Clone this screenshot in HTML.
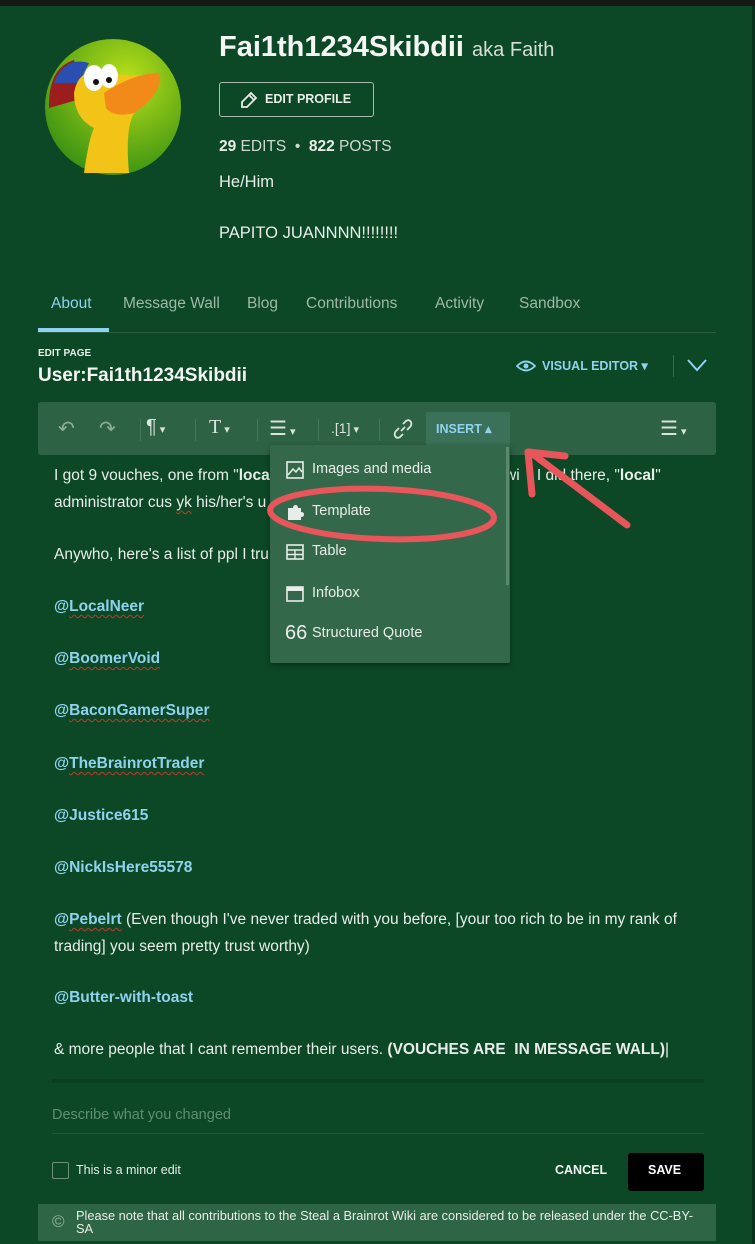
<!DOCTYPE html>
<html><head><meta charset="utf-8"><style>
*{margin:0;padding:0;box-sizing:border-box}
body{width:755px;height:1244px;background:#0c4826;font-family:"Liberation Sans",sans-serif;color:#e8ede9;position:relative;overflow:hidden}
.a{position:absolute;white-space:nowrap}
.lnk{color:#8fd2ee;font-weight:bold}
.sq{text-decoration:underline wavy #c0392b;text-decoration-thickness:1px;text-underline-offset:3px}
.t{font-size:15.5px;left:54px}
.tab{font-size:15.5px;color:#9fb8a8;top:295px}
.mi{font-size:14.5px;color:#e8ede9;left:312px}
.tb{color:#d8e4dc;font-size:20px;top:416px}
</style></head><body>
<div class="a" style="left:0;top:0;width:755px;height:6px;background:#151a17"></div>
<div class="a" style="right:0;top:6px;width:3px;height:1238px;background:#07301a"></div>

<svg class="a" style="left:44px;top:38px" width="138" height="138" viewBox="0 0 138 138">
<defs><radialGradient id="g" cx="60%" cy="30%" r="80%"><stop offset="0" stop-color="#b8e01a"/><stop offset="1" stop-color="#2f8a12"/></radialGradient></defs>
<circle cx="69" cy="69" r="68" fill="url(#g)"/>
<path d="M5 70 Q4 30 30 22 L40 60 Z" fill="#9b1d1d"/>
<path d="M10 45 Q20 18 45 25 L35 45Z" fill="#2a4fb0"/>
<path d="M40 135 Q45 100 50 90 Q30 80 30 55 Q35 25 70 35 Q90 40 110 35 Q120 50 95 70 Q80 80 85 135Z" fill="#f2c418"/>
<path d="M60 55 Q90 35 115 35 Q120 55 90 75 Q70 80 62 70Z" fill="#f28a1a"/>
<ellipse cx="50" cy="40" rx="10" ry="13" fill="#fff"/><ellipse cx="65" cy="38" rx="9" ry="12" fill="#fff"/>
<circle cx="52" cy="44" r="3" fill="#111"/><circle cx="65" cy="42" r="3" fill="#111"/>
</svg>

<div class="a" style="left:219px;top:31px;font-size:29px;font-weight:bold;color:#f4f6f4">Fai1th1234Skibdii <span style="font-weight:normal;font-size:20px;color:#d6ded8">aka Faith</span></div>
<div class="a" style="left:219px;top:82px;width:155px;height:35px;border:1px solid #a8bdb0;border-radius:3px"></div>
<svg class="a" style="left:238px;top:89px" width="22" height="22" viewBox="0 0 22 22"><path d="M4 18 L4 13 L13 4 L18 9 L9 18 Z M11 6 L16 11" fill="none" stroke="#e8ede9" stroke-width="1.8"/></svg>
<div class="a" style="left:265px;top:92px;font-size:12.5px;font-weight:bold;color:#e8ede9">EDIT PROFILE</div>
<div class="a" style="left:219px;top:138px;font-size:15.5px;color:#cfd9d2"><b style="color:#e8ede9">29</b> EDITS &nbsp;•&nbsp; <b style="color:#e8ede9">822</b> POSTS</div>
<div class="a" style="left:219px;top:173px;font-size:16.5px">He/Him</div>
<div class="a" style="left:219px;top:224px;font-size:16.5px">PAPITO JUANNNN!!!!!!!!</div>

<div class="a tab" style="left:51px;color:#8fd2ee">About</div>
<div class="a tab" style="left:123px">Message Wall</div>
<div class="a tab" style="left:247px">Blog</div>
<div class="a tab" style="left:306px">Contributions</div>
<div class="a tab" style="left:435px">Activity</div>
<div class="a tab" style="left:519px">Sandbox</div>
<div class="a" style="left:38px;top:332px;width:678px;height:1px;background:#2a5e3e"></div>
<div class="a" style="left:38px;top:328px;width:71px;height:4px;background:#8fd2ee"></div>

<div class="a" style="left:38px;top:348px;font-size:10px;font-weight:bold">EDIT PAGE</div>
<div class="a" style="left:38px;top:365px;font-size:19px;font-weight:bold;color:#f2f5f3">User:Fai1th1234Skibdii</div>
<svg class="a" style="left:516px;top:357px" width="20" height="18" viewBox="0 0 20 18"><path d="M1 9 Q10 0 19 9 Q10 18 1 9Z" fill="none" stroke="#8fd2ee" stroke-width="1.8"/><circle cx="10" cy="9" r="2.5" fill="#8fd2ee"/></svg>
<div class="a" style="left:542px;top:358px;font-size:12.5px;font-weight:bold;color:#8fd2ee">VISUAL EDITOR ▾</div>
<div class="a" style="left:673px;top:355px;width:1px;height:22px;background:#3b6b4e"></div>
<svg class="a" style="left:686px;top:358px" width="22" height="14" viewBox="0 0 22 14"><path d="M2 2 L11 12 L20 2" fill="none" stroke="#8fd2ee" stroke-width="2"/></svg>

<div class="a" style="left:38px;top:402px;width:678px;height:53px;background:#2e6245;border-radius:3px"></div>
<div class="a tb" style="left:58px;color:#8fae9a">↶</div>
<div class="a tb" style="left:99px;color:#8fae9a">↷</div>
<div class="a" style="left:140px;top:419px;width:1px;height:22px;background:#46775a"></div>
<div class="a tb" style="left:146px">¶<span style="font-size:11px"> ▾</span></div>
<div class="a" style="left:195px;top:419px;width:1px;height:22px;background:#46775a"></div>
<div class="a tb" style="left:209px;font-family:'Liberation Serif',serif">T<span style="font-size:11px;font-family:'Liberation Sans'"> ▾</span></div>
<div class="a" style="left:257px;top:419px;width:1px;height:22px;background:#46775a"></div>
<div class="a tb" style="left:269px">☰<span style="font-size:11px"> ▾</span></div>
<div class="a" style="left:318px;top:419px;width:1px;height:22px;background:#46775a"></div>
<div class="a tb" style="left:331px;font-size:14px;top:420px">.[1]<span style="font-size:11px"> ▾</span></div>
<div class="a" style="left:379px;top:419px;width:1px;height:22px;background:#46775a"></div>
<svg class="a" style="left:393px;top:418px" width="20" height="22" viewBox="0 0 20 22"><path d="M8 13 L12 9 M10 6 L13 3 Q16 1 18 4 Q19 7 17 9 L14 12 M10 16 L7 19 Q4 21 2 18 Q1 15 3 13 L6 10" fill="none" stroke="#d8e4dc" stroke-width="1.8"/></svg>
<div class="a" style="left:426px;top:412px;width:84px;height:33px;background:#3a7158;border-radius:2px"></div>
<div class="a" style="left:436px;top:421px;font-size:12.5px;font-weight:bold;color:#8fd2ee">INSERT ▴</div>
<div class="a tb" style="left:660px">☰<span style="font-size:11px"> ▾</span></div>

<div class="a t" style="top:467px">I got 9 vouches, one from "<b>loca</b></div>
<div class="a t" style="top:467px;left:505px">wi&nbsp; t I did there, "<b>local</b>"</div>
<div class="a t" style="top:494px">administrator cus <span class="sq">yk</span> his/her's u</div>
<div class="a t" style="top:546px">Anywho, here's a list of ppl I tru</div>
<div class="a t lnk" style="top:598px">@<span class="sq">LocalNeer</span></div>
<div class="a t lnk" style="top:650px">@<span class="sq">BoomerVoid</span></div>
<div class="a t lnk" style="top:702px">@<span class="sq">BaconGamerSuper</span></div>
<div class="a t lnk" style="top:755px">@<span class="sq">TheBrainrotTrader</span></div>
<div class="a t lnk" style="top:807px">@Justice615</div>
<div class="a t lnk" style="top:859px">@NickIsHere55578</div>
<div class="a t" style="top:911px"><span class="lnk">@<span class="sq">Pebelrt</span></span> (Even though I've never traded with you before, [your too rich to be in my rank of</div>
<div class="a t" style="top:938px">trading] you seem pretty trust worthy)</div>
<div class="a t lnk" style="top:989px">@Butter-with-toast</div>
<div class="a t" style="top:1041px">&amp; more people that I cant remember their users. <b>(VOUCHES ARE&nbsp; IN MESSAGE WALL)</b>|</div>

<div class="a" style="left:270px;top:445px;width:240px;height:218px;background:#33694a;box-shadow:0 2px 6px rgba(0,0,0,.35);border-radius:2px"></div>
<div class="a" style="left:506px;top:447px;width:3px;height:138px;background:#5a8a6e"></div>
<svg class="a" style="left:286px;top:461px" width="18" height="18" viewBox="0 0 18 18"><rect x="1" y="1" width="16" height="16" fill="none" stroke="#e8ede9" stroke-width="1.6"/><path d="M2 14 L7 8 L10 11 L13 7 L16 11" fill="none" stroke="#e8ede9" stroke-width="1.5"/></svg>
<div class="a mi" style="top:461px">Images and media</div>
<svg class="a" style="left:286px;top:503px" width="18" height="18" viewBox="0 0 18 18"><path d="M2 5 H7 Q7 2 9.5 2 Q12 2 12 5 H15 V9 Q18 9 18 11.5 Q18 14 15 14 V17 H2Z" fill="#e8ede9"/></svg>
<div class="a mi" style="top:503px">Template</div>
<svg class="a" style="left:286px;top:543px" width="18" height="18" viewBox="0 0 18 18"><rect x="1" y="2" width="16" height="14" fill="none" stroke="#e8ede9" stroke-width="1.6"/><path d="M1 7 H17 M9 7 V16 M1 11.5 H17" stroke="#e8ede9" stroke-width="1.4"/></svg>
<div class="a mi" style="top:543px">Table</div>
<svg class="a" style="left:286px;top:585px" width="18" height="18" viewBox="0 0 18 18"><rect x="1" y="2" width="16" height="14" fill="none" stroke="#e8ede9" stroke-width="1.6"/><rect x="1" y="2" width="16" height="4" fill="#e8ede9"/></svg>
<div class="a mi" style="top:585px">Infobox</div>
<div class="a" style="left:285px;top:622px;font-size:20px;color:#e8ede9">66</div>
<div class="a mi" style="top:625px">Structured Quote</div>

<svg class="a" style="left:0;top:0" width="755" height="1244" viewBox="0 0 755 1244">
<ellipse cx="382" cy="514" rx="112" ry="25" fill="none" stroke="#e8555a" stroke-width="6" transform="rotate(2 382 514)"/>
<path d="M627 525 L530 452 M528 452 L565 456 M528 452 L532 494" fill="none" stroke="#e8555a" stroke-width="7" stroke-linecap="round"/>
</svg>

<div class="a" style="left:52px;top:1079px;width:652px;height:4px;background:#0a3f21"></div>
<div class="a" style="left:52px;top:1107px;font-size:14.5px;color:#5f8f71">Describe what you changed</div>
<div class="a" style="left:52px;top:1133px;width:652px;height:1px;background:#24583a"></div>
<div class="a" style="left:52px;top:1162px;width:17px;height:17px;border:1px solid #6e8f7b;border-radius:2px"></div>
<div class="a" style="left:76px;top:1163px;font-size:12.5px">This is a minor edit</div>
<div class="a" style="left:555px;top:1163px;font-size:12.5px;font-weight:bold;color:#f2f5f3">CANCEL</div>
<div class="a" style="left:628px;top:1153px;width:76px;height:38px;background:#000;border-radius:3px"></div>
<div class="a" style="left:648px;top:1163px;font-size:12.5px;font-weight:bold;color:#fff">SAVE</div>

<div class="a" style="left:38px;top:1204px;width:678px;height:37px;background:#2e6645"></div>
<div class="a" style="left:52px;top:1212px;font-size:17px;color:#8fae9a">©</div>
<div class="a" style="left:76px;top:1209px;font-size:12.8px;line-height:13px;color:#e8ede9;white-space:normal;width:632px">Please note that all contributions to the Steal a Brainrot Wiki are considered to be released under the CC-BY-SA</div>
</body></html>
